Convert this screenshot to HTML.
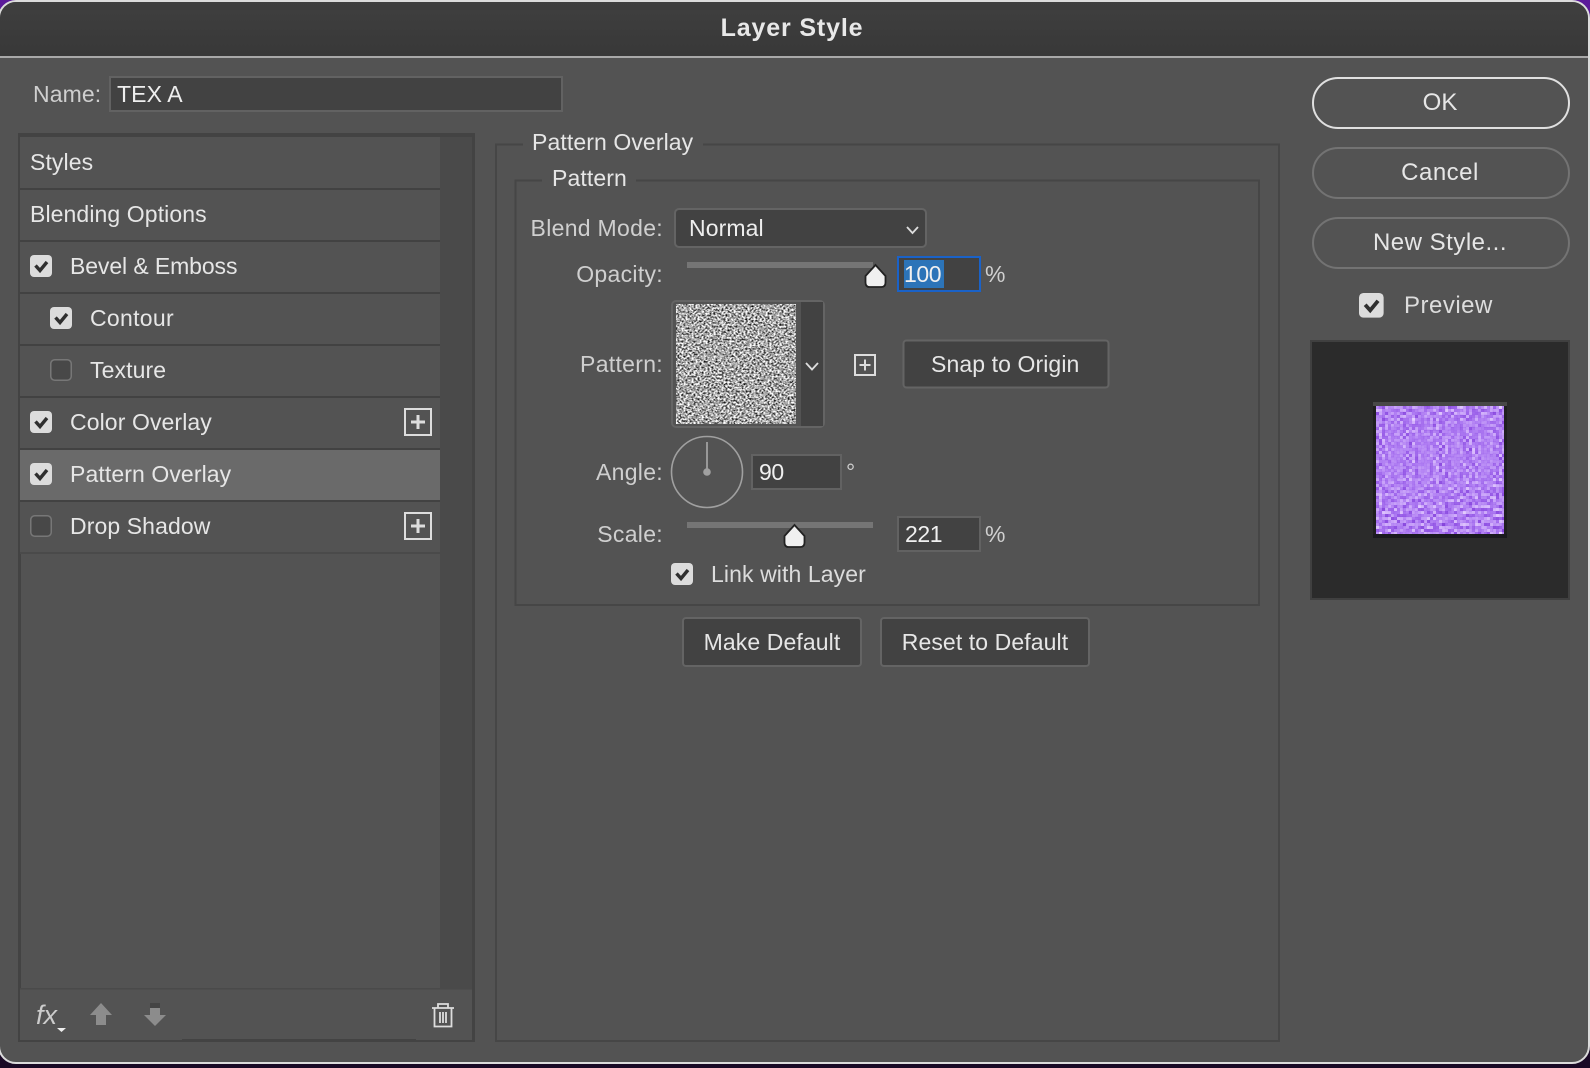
<!DOCTYPE html>
<html lang="en"><head><meta charset="utf-8"><title>Layer Style</title>
<style>
html,body{margin:0;padding:0;width:1590px;height:1068px;overflow:hidden;background:linear-gradient(#5b1a9a 0,#5b1a9a 50%,#1a0a26 50%,#1a0a26 100%)}
body{position:relative;font-family:"Liberation Sans",sans-serif;font-size:23px;letter-spacing:.1px;color:#e6e6e6}
#win{position:absolute;left:-2px;top:0;width:1588px;height:1060px;border:2px solid #dcdcdc;border-radius:18px;background:#535353;overflow:hidden}
#bar{position:absolute;left:0;top:0;width:100%;height:54px;background:linear-gradient(#3f3f3f,#383838);border-bottom:2px solid #a8a8a8}
.t{position:absolute;white-space:nowrap;line-height:30px;height:30px}
.l{color:#cfcfcf}
.r{left:0;text-align:right;letter-spacing:.3px}
.c{text-align:center}
.big{font-size:24px;letter-spacing:.5px}
.b{position:absolute;box-sizing:border-box;background:#424242;border:2.5px solid #626262}
.pill{position:absolute;box-sizing:border-box;left:1312px;width:258px;height:52px;border-radius:26px;border:2px solid #737373}
svg{position:absolute;overflow:visible}
</style></head>
<body>
<div id="win"><div id="bar"></div></div>
<div class="t c" style="left:592px;width:400px;top:13px;font-weight:bold;font-size:25px;letter-spacing:.85px;color:#e8e8e8">Layer Style</div>

<div class="t l" style="left:33px;top:79px">Name:</div>
<div class="b" style="left:109px;top:76px;width:454px;height:36px"></div>
<div class="t" style="left:117px;top:79px;color:#eee">TEX A</div>

<svg style="left:0;top:0" width="1590" height="1068" viewBox="0 0 1590 1068">
<defs>
<g id="ck"><rect width="22" height="22" rx="4" fill="#dcdcdc"/><path d="M5.5 10.5L10 15.5L17 7" fill="none" stroke="#2f2f2f" stroke-width="3.4"/></g>
<g id="un"><rect x=".75" y=".75" width="20.5" height="20.5" rx="4" fill="#484848" stroke="#777" stroke-width="1.5"/></g>
<g id="pl"><rect x="1" y="1" width="26" height="26" fill="none" stroke="#ddd" stroke-width="2"/><path d="M14 7V21M7 14H21" stroke="#ddd" stroke-width="3"/></g>
<path id="th" d="M11.5 1L21.5 12V18.5Q21.500 23 17.500 23H5.500Q1.500 23 1.500 18.500V12Z" fill="#f0f0f0" stroke="#222" stroke-width="1.800"/>
</defs>
<!-- list panel -->
<rect x="18" y="133" width="457" height="909" fill="#434343"/>
<rect x="20" y="137" width="452" height="852" fill="#535353"/>
<rect x="21" y="552" width="419" height="437" fill="#535353"/>
<rect x="18" y="552" width="3" height="437" fill="#434343"/>
<rect x="440" y="137" width="32" height="852" fill="#4a4a4a"/>
<rect x="20" y="989" width="452" height="51" fill="#535353"/>
<rect x="20" y="988" width="452" height="1.5" fill="#4a4a4a"/>
<rect x="182" y="1039" width="234" height="1" fill="#434343"/>
<rect x="20" y="450" width="420" height="50" fill="#6a6a6a"/>
<g fill="#424242"><rect x="20" y="188" width="420" height="2"/><rect x="20" y="240" width="420" height="2"/><rect x="20" y="292" width="420" height="2"/><rect x="20" y="344" width="420" height="2"/><rect x="20" y="396" width="420" height="2"/><rect x="20" y="448" width="420" height="2"/><rect x="20" y="500" width="420" height="2"/></g>
<rect x="20" y="552" width="420" height="2" fill="#4a4a4a"/>
<use href="#ck" x="30" y="255"/><use href="#ck" x="50" y="307"/><use href="#un" x="50" y="359"/><use href="#ck" x="30" y="411"/><use href="#ck" x="30" y="463"/><use href="#un" x="30" y="515"/>
<use href="#pl" x="404" y="408"/><use href="#pl" x="404" y="512"/>
<!-- footer icons -->
<path d="M57 1028H66L61.500 1032Z" fill="#eee"/>
<path d="M101 1003L112 1015H106V1025H96V1015H90Z" fill="#8c8c8c"/>
<path d="M150 1008H160V1015H166L155 1026L144 1015H150Z" fill="#8c8c8c"/>
<rect x="150" y="1003" width="10" height="5" fill="#444"/>
<path d="M432 1008H454M438 1008V1004H448V1008M434.500 1008V1026.500H451.500V1008M440 1012V1023M443 1012V1023M446 1012V1023" fill="none" stroke="#ddd" stroke-width="1.800"/>
<!-- groups -->
<path d="M523 144.500H496V1041H1279V144.500H703" fill="none" stroke="#464646" stroke-width="2"/>
<path d="M542 180.500H515.500V605H1259V180.500H636" fill="none" stroke="#464646" stroke-width="2"/>
<!-- select -->
<rect x="675" y="209" width="251" height="38" rx="4" fill="#424242" stroke="#646464" stroke-width="2"/>
<path d="M907 227L912.500 233L918 227" fill="none" stroke="#ddd" stroke-width="1.800"/>
<!-- sliders -->
<rect x="687" y="262" width="186" height="6" fill="#757575"/>
<use href="#th" x="864" y="264"/>
<rect x="687" y="522" width="186" height="6" fill="#757575"/>
<use href="#th" x="783" y="524"/>
<!-- pattern well -->
<rect x="672" y="301" width="152" height="126" rx="4" fill="#535353" stroke="#646464" stroke-width="2"/>
<rect x="801" y="302" width="22" height="124" fill="#424242"/>
<path d="M806 363L812 369.500L818 363" fill="none" stroke="#ddd" stroke-width="1.800"/>
<rect x="855" y="355" width="20" height="20" fill="none" stroke="#ddd" stroke-width="2"/>
<path d="M865 359.500V370.500M859.500 365H870.500" stroke="#ddd" stroke-width="2"/>
<!-- snap -->
<rect x="903.500" y="340.500" width="205" height="47" rx="3" fill="#424242" stroke="#646464" stroke-width="2"/>
<!-- dial -->
<circle cx="707" cy="472" r="35.500" fill="none" stroke="#a0a0a0" stroke-width="1.600"/>
<path d="M707 442V472" stroke="#a0a0a0" stroke-width="1.800"/>
<circle cx="707" cy="472" r="3.800" fill="#a0a0a0"/>
<!-- link checkbox, buttons -->
<use href="#ck" x="671" y="563"/>
<rect x="683" y="618" width="178" height="48" rx="3" fill="#424242" stroke="#646464" stroke-width="2"/>
<rect x="881" y="618" width="208" height="48" rx="3" fill="#424242" stroke="#646464" stroke-width="2"/>
<!-- preview -->
<use href="#ck" transform="translate(1359 293) scale(1.12)"/>
<rect x="1311" y="341" width="258" height="258" fill="#2b2b2b" stroke="#404040" stroke-width="2"/>
<rect x="1373" y="402" width="134" height="136" fill="#1f1f1f"/>
<rect x="1373" y="402" width="134" height="4" fill="#484848"/>
<rect x="1373" y="534" width="134" height="4" fill="#1a1a1e"/>
</svg>

<!-- pattern swatch -->
<svg style="left:676px;top:304px" width="120" height="120" viewBox="0 0 120 120">
<filter id="f1" x="0" y="0" width="100%" height="100%" color-interpolation-filters="sRGB">
<feTurbulence type="fractalNoise" baseFrequency="0.5 0.54" numOctaves="2" seed="7"/>
<feColorMatrix type="matrix" values="1 0 0 0 0 1 0 0 0 0 1 0 0 0 0 0 0 0 0 1"/>
<feComponentTransfer><feFuncR type="linear" slope="2.1" intercept="-0.4"/><feFuncG type="linear" slope="2.1" intercept="-0.4"/><feFuncB type="linear" slope="2.1" intercept="-0.4"/></feComponentTransfer>
</filter>
<rect width="120" height="120" filter="url(#f1)"/>
</svg>

<!-- preview swatch -->
<svg style="left:1376px;top:406px" width="128" height="128" viewBox="0 0 128 128">
<filter id="f2" x="0" y="0" width="100%" height="100%" color-interpolation-filters="sRGB">
<feTurbulence type="fractalNoise" baseFrequency="0.3 0.34" numOctaves="1" seed="11" result="n"/>
<feColorMatrix in="n" type="matrix" values="1 0 0 0 0 1 0 0 0 0 1 0 0 0 0 0 0 0 0 1"/>
<feComponentTransfer result="c">
<feFuncR type="table" tableValues="0.44 0.5 0.58 0.68 0.8 0.92 1"/>
<feFuncG type="table" tableValues="0.16 0.24 0.34 0.48 0.66 0.84 0.98"/>
<feFuncB type="table" tableValues="0.8 0.84 0.9 0.95 0.98 1 1"/>
</feComponentTransfer>
<feFlood x="1" y="1" width="1" height="1" flood-color="#000"/>
<feComposite width="3" height="3"/>
<feTile result="g"/>
<feComposite in="c" in2="g" operator="in"/>
<feMorphology operator="dilate" radius="1"/>
</filter>
<rect width="128" height="128" fill="#a66ff0"/>
<rect width="128" height="128" filter="url(#f2)"/>
</svg>

<!-- list text -->
<div class="t" style="left:30px;top:147px">Styles</div>
<div class="t" style="left:30px;top:199px">Blending Options</div>
<div class="t" style="left:70px;top:251px;letter-spacing:-.1px">Bevel &amp; Emboss</div>
<div class="t" style="left:90px;top:303px;letter-spacing:.3px">Contour</div>
<div class="t" style="left:90px;top:355px">Texture</div>
<div class="t" style="left:70px;top:407px">Color Overlay</div>
<div class="t" style="left:70px;top:459px">Pattern Overlay</div>
<div class="t" style="left:70px;top:511px">Drop Shadow</div>
<div class="t" style="left:36px;top:1000px;font-style:italic;font-size:27px;color:#ccc;letter-spacing:0">fx</div>

<!-- group labels -->
<div class="t" style="left:532px;top:127px">Pattern Overlay</div>
<div class="t" style="left:552px;top:163px">Pattern</div>

<!-- form -->
<div class="t l r" style="width:663px;top:213px">Blend Mode:</div>
<div class="t" style="left:689px;top:213px;color:#eee">Normal</div>

<div class="t l r" style="width:663px;top:259px">Opacity:</div>
<div class="b" style="left:897px;top:256px;width:84px;height:36px;border-color:#1a62c8"></div>
<div style="position:absolute;left:904px;top:260px;width:40px;height:28px;background:#2c74b8"></div>
<div class="t" style="left:904px;top:259px;color:#f0f0f0;letter-spacing:-.4px">100</div>
<div class="t l" style="left:985px;top:259px">%</div>

<div class="t l r" style="width:663px;top:349px">Pattern:</div>
<div class="t" style="left:931px;top:349px">Snap to Origin</div>

<div class="t l r" style="width:663px;top:457px">Angle:</div>
<div class="b" style="left:751px;top:454px;width:91px;height:36px"></div>
<div class="t" style="left:759px;top:457px;color:#f0f0f0;letter-spacing:-.4px">90</div>
<div class="t l" style="left:846px;top:457px">°</div>

<div class="t l r" style="width:663px;top:519px">Scale:</div>
<div class="b" style="left:897px;top:516px;width:84px;height:36px"></div>
<div class="t" style="left:905px;top:519px;color:#f0f0f0;letter-spacing:-.4px">221</div>
<div class="t l" style="left:985px;top:519px">%</div>

<div class="t" style="left:711px;top:559px;color:#dcdcdc">Link with Layer</div>

<div class="t c" style="left:683px;width:178px;top:627px">Make Default</div>
<div class="t c" style="left:881px;width:208px;top:627px">Reset to Default</div>

<!-- right buttons -->
<div class="pill" style="top:77px;border-color:#e0e0e0"></div>
<div class="pill" style="top:147px"></div>
<div class="pill" style="top:217px"></div>
<div class="t c big" style="left:1311px;width:258px;top:88px;letter-spacing:0">OK</div>
<div class="t c big" style="left:1311px;width:258px;top:158px">Cancel</div>
<div class="t c big" style="left:1311px;width:258px;top:228px">New Style...</div>
<div class="t big" style="left:1404px;top:291px;color:#dcdcdc">Preview</div>
</body></html>
